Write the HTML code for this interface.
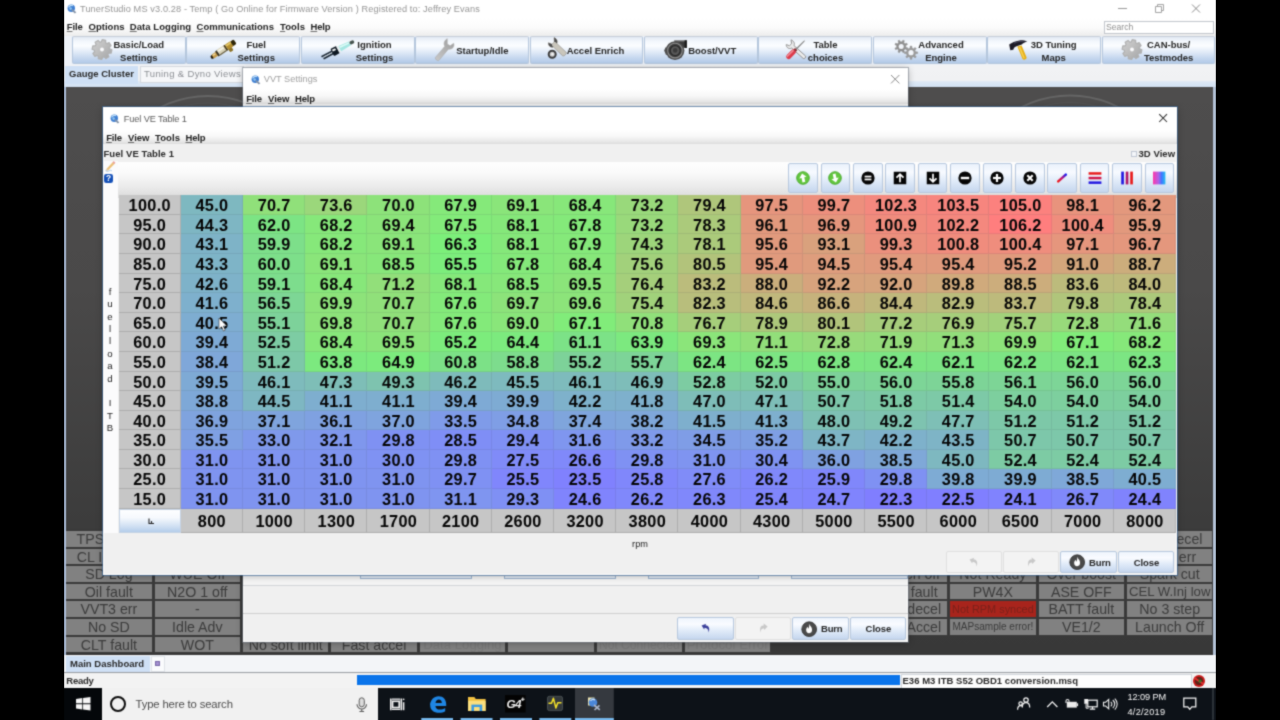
<!DOCTYPE html><html><head><meta charset="utf-8"><title>TunerStudio MS</title><style>
*{box-sizing:border-box;margin:0;padding:0}
html,body{width:1280px;height:720px;overflow:hidden;background:#000}
body{font-family:"Liberation Sans",Arial,sans-serif;position:relative;color:#000}
.abs,.c,.ind,.tbb,.ttb,.dbtn,.vt,.t{position:absolute}
.t{white-space:nowrap;line-height:1;display:block}
#app{position:absolute;left:64px;top:0;width:1152px;height:689px;background:#f0f0f0;overflow:hidden}
#all{position:absolute;left:0;top:-8px;width:1280px;height:736px;overflow:hidden;filter:url(#sb)}
#in{position:absolute;left:0;top:8px;width:1280px;height:728px}
.title{left:64px;top:0;width:1152px;height:18px;background:#fff}
.title .tx{position:absolute;left:15.5px;top:3px;font-size:9.7px;color:#8c8c8c;white-space:nowrap;letter-spacing:0.0px}
.menubar{left:64px;top:18px;width:1152px;height:18px;background:linear-gradient(#fff 0%,#fbfbfb 55%,#ececec 100%)}
.menubar span,.wmenu span{font-weight:bold;font-size:10.6px;position:absolute;top:3px;white-space:nowrap;color:#1c1c1c}
u{text-decoration:underline;text-underline-offset:1px;text-decoration-thickness:0.7px;text-decoration-color:rgba(20,20,20,.6)}
.search{left:1104px;top:21px;width:109.5px;height:12.5px;background:#fff;border:1px solid #c2c6cc;font-size:8.6px;color:#8a8a8a;line-height:10px;padding-left:2px}
.toolbar{left:64px;top:36px;width:1152px;height:29px;background:#eef2f8}
.tbb{top:36.3px;height:27.9px;border:1px solid #b4c6dc;border-top-color:#c6ced9;background:linear-gradient(#e2e9f3 0%,#f4f8fd 18%,#fbfdff 34%,#e3ecf8 56%,#c4d6ee 82%,#b3cae8 100%);border-radius:2px}
.tbb .lbl{position:absolute;transform:translateX(-50%);font-weight:bold;font-size:10.4px;line-height:13.2px;text-align:center;color:#222;white-space:nowrap;top:7px}
.tbb .lbl.two{top:0.5px}
.tbb .ico{position:absolute;top:-1px;line-height:0;transform:translateX(-50%)}
.tabs{left:64px;top:64.5px;width:1152px;height:22px;background:linear-gradient(#f1f2f4 0%,#f0f1f3 70%,#dde8f5 76%,#d2e1f3 100%)}
.tab1{left:65px;top:66px;width:72.5px;height:17.5px;background:#cfe0f5;font-weight:bold;font-size:10.4px;line-height:15.5px;padding-left:4.5px;color:#222;white-space:nowrap}
.tab2{left:139.5px;top:66px;width:104px;height:16.5px;background:#f6f7f9;border:1px solid #d4d8de;font-size:10.6px;line-height:14px;padding-left:3px;color:#8a8d92;white-space:nowrap;letter-spacing:0.25px}
.dash{left:64px;top:86.5px;width:1152px;height:568px;background:linear-gradient(#4e4d4d 0%,#4a4949 35%,#3b3b3b 80%,#383838 100%)}
.dashl{left:64px;top:86.5px;width:2.4px;height:568px;background:#adc0dc}
.dashr{left:1212.5px;top:86.5px;width:3.5px;height:568px;background:#b4c3d8}
.ind{background:#818181;box-shadow:0 0 0 1.6px #3a3a3a;text-align:center;font-size:14.2px;line-height:16.3px;color:#3b3b3b;white-space:nowrap;overflow:hidden}
.ind span{display:inline-block}
.ind.sm{font-size:10.05px}
.ind.md{font-size:13.2px}
.ind.red{background:#a8241c;color:#7a211a;font-size:10.9px}
.ind.dim{color:#777777}
.btab{left:64px;top:654.5px;width:1152px;height:18.5px;background:#f3f5f8;border-bottom:1px solid #9a9ea4}
.btab1{left:66px;top:656px;width:84px;height:16px;background:#cfe0f5;font-weight:bold;font-size:10.2px;line-height:15px;padding-left:4.5px;color:#222;white-space:nowrap}
.status{left:64px;top:673.5px;width:1152px;height:15.5px;background:#f3f3f3}
.status .rdy{position:absolute;left:2.5px;top:1.5px;font-size:10.2px;font-weight:bold;color:#2a2a2a}
.prog{left:357px;top:674.8px;width:543px;height:10.4px;background:#0a74ea}
.msq{left:900.5px;top:674px;width:291px;height:14.5px;background:#fdfdfd;border:1px solid #d0d4da;font-size:9.9px;font-weight:bold;color:#2a2a2a;line-height:12px;padding-left:1.5px;white-space:nowrap}
.taskbar{left:64px;top:688.2px;width:1152px;height:39.8px;background:#0d1218}
.win{background:#f0f0f0;box-shadow:0 0 0 1px rgba(52,98,150,.62),0 1px 7px rgba(0,0,0,.28);outline:1px solid rgba(255,255,255,.75);outline-offset:-1px}
.win.inact{box-shadow:0 0 0 1px rgba(110,118,130,.5),0 1px 7px rgba(0,0,0,.3)}
.wtitle{position:absolute;left:0;top:0;right:0;background:#fff}
.wtitle .tx{position:absolute;font-size:9.9px;white-space:nowrap}
.wmenu{position:absolute;left:0;right:0;background:linear-gradient(#fff 0%,#f8f8f8 45%,#e9e9e9 80%,#dcdcdc 100%)}
.c{font-weight:bold;font-size:16.3px;line-height:20.8px;text-align:center;color:#050505;box-shadow:inset -1px -1px 0 rgba(60,70,90,.11);white-space:nowrap;letter-spacing:0.3px}
.c.ax{background:#c6c6c6;box-shadow:inset -1px -1px 0 rgba(0,0,0,.12)}
.c.xr{line-height:25.3px}
.ttb{top:163px;height:30.4px;border:1px solid #b7c8de;border-radius:2px;background:linear-gradient(#eaf1fb 0%,#f7faff 30%,#e2ecf9 58%,#c5d6ee 100%);display:flex;align-items:center;justify-content:center}
.dbtn{border:1px solid #b7c8de;border-radius:2px;background:linear-gradient(#eef4fc 0%,#f9fbff 30%,#e2ecf9 58%,#c5d6ee 100%);display:flex;align-items:center;justify-content:center;font-weight:bold;font-size:10.2px;color:#222;gap:3.5px}
.dbtn.dis{background:#f3f3f3;border-color:#e0e0e0}
.vt{left:104px;width:12px;text-align:center;font-size:9.6px;line-height:12px;color:#222}
</style></head><body><svg width="0" height="0" style="position:absolute"><defs><filter id="sb" x="0" y="0" width="100%" height="100%" color-interpolation-filters="sRGB"><feConvolveMatrix order="3" kernelMatrix="0.035 0.105 0.035 0.105 0.44 0.105 0.035 0.105 0.035" divisor="1" edgeMode="duplicate" preserveAlpha="true"/></filter></defs></svg><div id="all"><div id="in"><div class="abs" style="left:64px;top:-8px;width:1152px;height:10px;background:#fff"></div><div id="app"></div>
<div class="abs title"><span class="abs" style="left:2.5px;top:4px;line-height:0"><svg width="10" height="10" viewBox="0 0 10 10"><circle cx="4.300" cy="4.300" r="3.700" fill="#3f7fd2"/><path d="M1.700,3.400 a3,3 0 0 1 4.200,-1.700" stroke="#bfe0fa" stroke-width="1.300" fill="none"/><circle cx="3.600" cy="4.600" r="1.300" fill="#8fc4f2"/><path d="M5.200,5 L9.300,8.300 L7.900,9.400 L4.300,6.200Z" fill="#8392a6"/></svg></span><svg class="abs" style="left:1040px;top:0" width="112" height="18" viewBox="0 0 112 18"><path d="M14,8.5 h9" stroke="#9a9a9a" stroke-width="1"/><path d="M51.5,6.5 h6 v6 h-6z M53.5,6.5 v-2 h6 v6 h-2" stroke="#9a9a9a" stroke-width="0.9" fill="none"/><path d="M88,4.5 l8,8 M96,4.5 l-8,8" stroke="#8a8a8a" stroke-width="1"/></svg></div>
<span class="t" style="left:80.00px;top:5.01px;font-size:9.2px;color:#959595;letter-spacing:0.113px;">TunerStudio MS v3.0.28 - Temp ( Go Online for Firmware Version ) Registered to: Jeffrey Evans</span>
<div class="abs menubar"></div>
<span class="t" style="left:66.80px;top:22.26px;font-size:9.5px;color:#1e1e1e;font-weight:bold;letter-spacing:-0.166px;"><u>F</u>ile</span>
<span class="t" style="left:88.50px;top:22.26px;font-size:9.5px;color:#1e1e1e;font-weight:bold;letter-spacing:0.016px;"><u>O</u>ptions</span>
<span class="t" style="left:129.80px;top:22.26px;font-size:9.5px;color:#1e1e1e;font-weight:bold;letter-spacing:0.059px;"><u>D</u>ata Logging</span>
<span class="t" style="left:196.60px;top:22.26px;font-size:9.5px;color:#1e1e1e;font-weight:bold;letter-spacing:0.024px;"><u>C</u>ommunications</span>
<span class="t" style="left:280.00px;top:22.26px;font-size:9.5px;color:#1e1e1e;font-weight:bold;letter-spacing:0.075px;"><u>T</u>ools</span>
<span class="t" style="left:310.50px;top:22.26px;font-size:9.5px;color:#1e1e1e;font-weight:bold;letter-spacing:-0.147px;"><u>H</u>elp</span>
<div class="abs search"></div>
<span class="t" style="left:1106.00px;top:23.10px;font-size:8.6px;color:#8e8e8e;">Search</span>
<div class="abs toolbar"></div>
<div class="tbb" style="left:72.0px;width:113.8px"><span class="ico ico-gear" style="left:29.1px"><svg width="28" height="27" viewBox="0 0 28 27"><defs><linearGradient id="gg" x1="0" y1="0" x2="1" y2="1"><stop offset="0" stop-color="#d2d2d2"/><stop offset="0.5" stop-color="#bcbcbc"/><stop offset="1" stop-color="#a2a4a6"/></linearGradient></defs><path d="M21.67,12.80 L23.90,13.69 L23.19,17.18 L20.79,17.13 L19.91,18.43 L20.86,20.63 L17.90,22.60 L16.24,20.87 L14.70,21.17 L13.81,23.40 L10.32,22.69 L10.37,20.29 L9.07,19.41 L6.87,20.36 L4.90,17.40 L6.63,15.74 L6.33,14.20 L4.10,13.31 L4.81,9.82 L7.21,9.87 L8.09,8.57 L7.14,6.37 L10.10,4.40 L11.76,6.13 L13.30,5.83 L14.19,3.60 L17.68,4.31 L17.63,6.71 L18.93,7.59 L21.13,6.64 L23.10,9.60 L21.37,11.26Z" fill="url(#gg)" stroke="#b0b0b0" stroke-width="1.2" stroke-linejoin="round"/><circle cx="14" cy="13.5" r="1.9" fill="#fbfbfd"/></svg></span></div>
<span class="t" style="left:113.46px;top:39.96px;font-size:9.5px;color:#262626;font-weight:bold;">Basic/Load</span>
<span class="t" style="left:120.06px;top:52.86px;font-size:9.5px;color:#262626;font-weight:bold;">Settings</span>
<div class="tbb" style="left:186.4px;width:113.8px"><span class="ico ico-inj" style="left:35.8px"><svg width="30" height="27" viewBox="0 0 30 27"><g transform="translate(15,13.700) rotate(-34)"><rect x="4.500" y="0" width="4" height="6.300" rx="1" fill="#8c7228"/><rect x="-14.500" y="-1.900" width="4" height="3.800" rx="1.700" fill="#1c1408"/><rect x="-12.500" y="-2.300" width="5.500" height="4.600" rx="1" fill="#c49a48"/><rect x="-11.500" y="-1.600" width="3" height="1.300" fill="#f0d8a0"/><rect x="-7.500" y="-3" width="2" height="6" fill="#3a3222"/><rect x="-5.500" y="-3.300" width="8" height="6.600" rx="0.800" fill="#d8d2b8"/><rect x="-5" y="-2.500" width="7" height="2" fill="#f6f4e8"/><rect x="-5.500" y="2" width="8" height="1.300" fill="#6a6248"/><rect x="2.500" y="-3.200" width="1.800" height="6.400" fill="#4a3c18"/><rect x="4.300" y="-3" width="6.700" height="6" rx="0.800" fill="#b48e30"/><rect x="4.800" y="-2.300" width="5.800" height="1.600" fill="#e4c868"/><rect x="10.500" y="-2.700" width="4" height="5.400" rx="1.200" fill="#2e2608"/></g></svg></span></div>
<span class="t" style="left:246.44px;top:39.96px;font-size:9.5px;color:#262626;font-weight:bold;">Fuel</span>
<span class="t" style="left:237.46px;top:52.86px;font-size:9.5px;color:#262626;font-weight:bold;">Settings</span>
<div class="tbb" style="left:300.8px;width:113.8px"><span class="ico ico-plug" style="left:35.8px"><svg width="36" height="27" viewBox="0 0 36 27"><g transform="translate(18,13.600) rotate(-27.600)"><rect x="-18" y="-2.100" width="13" height="1.700" fill="#1c2834"/><rect x="-17" y="0.500" width="12" height="1.700" fill="#16222e"/><rect x="-16" y="-0.500" width="11" height="1" fill="#c8d0d8"/><rect x="-6.500" y="-4" width="6.500" height="8" rx="1" fill="#0e1822"/><rect x="-5.500" y="-2.600" width="3.600" height="2" fill="#f4f6f8"/><rect x="-0.300" y="-3.300" width="2.300" height="6.600" fill="#e8eef0"/><path d="M2,-3 L13.500,-2.100 L13.500,2.100 L2,3Z" fill="#a4e6e2"/><path d="M2.500,-2.300 L13,-1.500 L13,-0.200 L2.500,-0.400Z" fill="#ddfaf6"/><rect x="13.300" y="-1.700" width="4.700" height="3.400" rx="1.400" fill="#46544f"/></g></svg></span></div>
<span class="t" style="left:357.35px;top:39.96px;font-size:9.5px;color:#262626;font-weight:bold;">Ignition</span>
<span class="t" style="left:355.76px;top:52.86px;font-size:9.5px;color:#262626;font-weight:bold;">Settings</span>
<div class="tbb" style="left:415.2px;width:113.8px"><span class="ico ico-wrench" style="left:28.5px"><svg width="24" height="27" viewBox="0 0 24 27"><defs><linearGradient id="wg" x1="0" y1="0" x2="1" y2="0"><stop offset="0" stop-color="#c6c6c6"/><stop offset="1" stop-color="#a2a2a2"/></linearGradient></defs><g transform="translate(12,13.600) rotate(-50)"><path d="M-11.800,-2.300 L2.500,-2.300 C3.500,-5.300 6.500,-6.400 9.800,-5.300 L5.800,-1.900 L6.200,1.500 L10.400,2.600 C8.500,5.700 4.500,5.600 2.500,2.300 L-11.800,2.300 C-14,2.300 -14,-2.300 -11.800,-2.300Z" fill="url(#wg)" stroke="#a8a8a8" stroke-width="0.500"/></g></svg></span></div>
<span class="t" style="left:456.17px;top:46.16px;font-size:9.5px;color:#262626;font-weight:bold;">Startup/Idle</span>
<div class="tbb" style="left:529.6px;width:113.8px"><span class="ico ico-wrench2" style="left:26.4px"><svg width="24" height="27" viewBox="0 0 24 27"><g transform="translate(12.300,11.300) rotate(43.500)"><path d="M9.500,-2.500 L-3,-2.500 C-3.800,-5 -6.500,-5.800 -9,-4.800 L-5.800,-1.800 L-6,1.400 L-9.600,2.800 C-7.500,5.400 -4.200,4.800 -3,2.500 L9.500,2.500 C11.500,2.500 11.500,-2.500 9.500,-2.500Z" fill="#c9c6bc" stroke="#8e8c86" stroke-width="0.600"/><path d="M-9,-4.800 C-6.500,-5.800 -3.800,-5 -3,-2.500 L-5,-2.500 L-5.800,-1.800Z M-9.600,2.800 L-6,1.400 L-4.600,2.500 L-3,2.500 C-4.200,4.800 -7.500,5.400 -9.600,2.800Z" fill="#4e4e4e"/></g><circle cx="7.200" cy="18.300" r="3.500" fill="#cfcfcf" stroke="#3c3c3c" stroke-width="2"/><circle cx="7.600" cy="18.300" r="1.200" fill="#f2f2f2"/></svg></span></div>
<span class="t" style="left:566.72px;top:46.16px;font-size:9.5px;color:#262626;font-weight:bold;">Accel Enrich</span>
<div class="tbb" style="left:644.0px;width:113.8px"><span class="ico ico-turbo" style="left:30.6px"><svg width="26" height="27" viewBox="0 0 26 27"><path d="M11,4.500 L23.600,4.500 L23.600,11.700 L15,11.700Z" fill="#3a3a3a"/><rect x="21.600" y="4.200" width="2.300" height="7.800" fill="#1c1c1c"/><path d="M12,5.300 L21.400,5.300" stroke="#6c6c6c" stroke-width="0.900"/><circle cx="12" cy="14.600" r="9.400" fill="#4c4c4c"/><path d="M3.200,11.500 L1.800,14.500 L3.600,18.800" fill="#4c4c4c" stroke="#4c4c4c" stroke-width="1.200"/><circle cx="12" cy="14.600" r="7.300" fill="#3e3e3e" stroke="#8e8e8e" stroke-width="1.100"/><circle cx="12.200" cy="14.600" r="5" fill="#585858" stroke="#2a2a2a" stroke-width="1.300"/><circle cx="12.200" cy="14.400" r="2.300" fill="#3a3a3a"/></svg></span></div>
<span class="t" style="left:688.19px;top:46.16px;font-size:9.5px;color:#262626;font-weight:bold;">Boost/VVT</span>
<div class="tbb" style="left:758.4px;width:113.8px"><span class="ico ico-tools" style="left:37.0px"><svg width="24" height="27" viewBox="0 0 24 27"><g transform="translate(11.800,13.500) rotate(42)"><path d="M11.500,-1.700 L-4,-1.700 C-4.800,-4.200 -7.500,-5 -10,-4 L-7,-1.500 L-7.200,1.400 L-10.400,2.800 C-8.300,5 -5.200,4.500 -4,1.700 L11.500,1.700 C13,1.700 13,-1.700 11.500,-1.700Z" fill="#ececec" stroke="#909090" stroke-width="0.900"/></g><g transform="translate(11.800,13.500) rotate(-45)"><path d="M0,-0.800 L11.500,-0.600 L13,0 L11.500,0.600 L0,0.800Z" fill="#8a8a8a"/><rect x="-12.500" y="-2.500" width="11.500" height="5" rx="2.300" fill="#dc3a4a"/><rect x="-11.500" y="-1.900" width="9.500" height="1.500" rx="0.700" fill="#f08a94"/><rect x="-1.500" y="-1.600" width="2" height="3.200" fill="#8c2c34"/></g></svg></span></div>
<span class="t" style="left:813.45px;top:39.96px;font-size:9.5px;color:#262626;font-weight:bold;">Table</span>
<span class="t" style="left:807.81px;top:52.86px;font-size:9.5px;color:#262626;font-weight:bold;">choices</span>
<div class="tbb" style="left:872.8px;width:113.8px"><span class="ico ico-gears" style="left:31.7px"><svg width="28" height="27" viewBox="0 0 28 27"><path d="M14.73,11.20 L16.46,12.15 L15.88,13.56 L13.98,13.02 L12.84,14.17 L13.39,16.06 L11.98,16.65 L11.02,14.93 L9.40,14.93 L8.45,16.66 L7.04,16.08 L7.58,14.18 L6.43,13.04 L4.54,13.59 L3.95,12.18 L5.67,11.22 L5.67,9.60 L3.94,8.65 L4.52,7.24 L6.42,7.78 L7.56,6.63 L7.01,4.74 L8.42,4.15 L9.38,5.87 L11.00,5.87 L11.95,4.14 L13.36,4.72 L12.82,6.62 L13.97,7.76 L15.86,7.21 L16.45,8.62 L14.73,9.58Z" fill="#909090" stroke="#8c8c8c" stroke-width="0.5" stroke-linejoin="round"/><circle cx="10.2" cy="10.4" r="2.5" fill="#f2f5fa"/><path d="M24.59,15.69 L26.65,15.91 L26.65,17.49 L24.59,17.71 L23.96,19.23 L25.26,20.85 L24.15,21.96 L22.53,20.66 L21.01,21.29 L20.79,23.35 L19.21,23.35 L18.99,21.29 L17.47,20.66 L15.85,21.96 L14.74,20.85 L16.04,19.23 L15.41,17.71 L13.35,17.49 L13.35,15.91 L15.41,15.69 L16.04,14.17 L14.74,12.55 L15.85,11.44 L17.47,12.74 L18.99,12.11 L19.21,10.05 L20.79,10.05 L21.01,12.11 L22.53,12.74 L24.15,11.44 L25.26,12.55 L23.96,14.17Z" fill="#9a9a9a" stroke="#949494" stroke-width="0.5" stroke-linejoin="round"/><circle cx="20" cy="16.700" r="2.600" fill="#f2f5fa"/></svg></span></div>
<span class="t" style="left:918.30px;top:39.96px;font-size:9.5px;color:#262626;font-weight:bold;">Advanced</span>
<span class="t" style="left:925.17px;top:52.86px;font-size:9.5px;color:#262626;font-weight:bold;">Engine</span>
<div class="tbb" style="left:987.2px;width:113.8px"><span class="ico ico-hammer" style="left:31.1px"><svg width="24" height="27" viewBox="0 0 24 27"><path d="M10.300,10.500 L14.600,9.500 L19.600,21.600 C20,23.300 16.500,24.600 15.600,23Z" fill="#e6ae12"/><path d="M11.500,11 L13.200,10.600 L17.800,22 L16.500,22.600Z" fill="#f6cf52"/><path d="M2.200,8.500 C5,6.500 8.500,5 12.500,4.400 C15,4.100 18,4.600 20.300,5.400 C18,6 16,7 14.800,8.600 L9.600,10.300 C8,10.700 7,11.600 6.300,13.700 L3.300,14.300Z" fill="#1c1a26"/><path d="M7,7.400 C10,5.800 13,5.200 16.500,5.300" stroke="#4a4860" stroke-width="0.900" fill="none"/></svg></span></div>
<span class="t" style="left:1030.83px;top:39.96px;font-size:9.5px;color:#262626;font-weight:bold;">3D Tuning</span>
<span class="t" style="left:1041.56px;top:52.86px;font-size:9.5px;color:#262626;font-weight:bold;">Maps</span>
<div class="tbb" style="left:1101.6px;width:113.8px"><span class="ico ico-gear" style="left:29.4px"><svg width="28" height="27" viewBox="0 0 28 27"><defs><linearGradient id="gg" x1="0" y1="0" x2="1" y2="1"><stop offset="0" stop-color="#d2d2d2"/><stop offset="0.5" stop-color="#bcbcbc"/><stop offset="1" stop-color="#a2a4a6"/></linearGradient></defs><path d="M21.67,12.80 L23.90,13.69 L23.19,17.18 L20.79,17.13 L19.91,18.43 L20.86,20.63 L17.90,22.60 L16.24,20.87 L14.70,21.17 L13.81,23.40 L10.32,22.69 L10.37,20.29 L9.07,19.41 L6.87,20.36 L4.90,17.40 L6.63,15.74 L6.33,14.20 L4.10,13.31 L4.81,9.82 L7.21,9.87 L8.09,8.57 L7.14,6.37 L10.10,4.40 L11.76,6.13 L13.30,5.83 L14.19,3.60 L17.68,4.31 L17.63,6.71 L18.93,7.59 L21.13,6.64 L23.10,9.60 L21.37,11.26Z" fill="url(#gg)" stroke="#b0b0b0" stroke-width="1.2" stroke-linejoin="round"/><circle cx="14" cy="13.5" r="1.9" fill="#fbfbfd"/></svg></span></div>
<span class="t" style="left:1146.96px;top:39.96px;font-size:9.5px;color:#262626;font-weight:bold;">CAN-bus/</span>
<span class="t" style="left:1143.88px;top:52.86px;font-size:9.5px;color:#262626;font-weight:bold;">Testmodes</span>
<div class="abs tabs"></div><div class="abs tab1"></div><div class="abs tab2"></div>
<span class="t" style="left:69.00px;top:68.76px;font-size:9.5px;color:#2a2a2a;font-weight:bold;letter-spacing:0.005px;">Gauge Cluster</span>
<span class="t" style="left:144.00px;top:68.66px;font-size:9.5px;color:#8c8f94;letter-spacing:0.353px;">Tuning &amp; Dyno Views</span>
<div class="abs dash"></div>
<svg class="abs" style="left:64px;top:87px" width="1152" height="40" viewBox="64 87 1152 40"><g fill="none"><circle cx="208" cy="202" r="106" stroke="#656565" stroke-width="1.800"/><circle cx="208" cy="202" r="99" stroke="#545454" stroke-width="1"/><circle cx="1070" cy="201.500" r="106" stroke="#656565" stroke-width="1.800"/><circle cx="1070" cy="201.500" r="99" stroke="#545454" stroke-width="1"/></g></svg>
<div class="ind" style="left:66.2px;top:531.2px;width:85.4px;height:15.50px;"><span>TPS accel</span></div>
<div class="ind" style="left:154.6px;top:531.2px;width:85.4px;height:15.50px;"><span></span></div>
<div class="ind" style="left:243.0px;top:531.2px;width:85.4px;height:15.50px;"><span></span></div>
<div class="ind" style="left:331.4px;top:531.2px;width:85.4px;height:15.50px;"><span></span></div>
<div class="ind" style="left:419.8px;top:531.2px;width:85.4px;height:15.50px;"><span></span></div>
<div class="ind" style="left:508.2px;top:531.2px;width:85.4px;height:15.50px;"><span></span></div>
<div class="ind" style="left:596.6px;top:531.2px;width:85.4px;height:15.50px;"><span></span></div>
<div class="ind" style="left:685.0px;top:531.2px;width:85.4px;height:15.50px;"><span></span></div>
<div class="ind" style="left:773.4px;top:531.2px;width:85.4px;height:15.50px;"><span></span></div>
<div class="ind" style="left:861.8px;top:531.2px;width:85.4px;height:15.50px;padding-left:5px;"><span></span></div>
<div class="ind" style="left:950.2px;top:531.2px;width:85.4px;height:15.50px;"><span></span></div>
<div class="ind" style="left:1038.6px;top:531.2px;width:85.4px;height:15.50px;"><span></span></div>
<div class="ind" style="left:1127.0px;top:531.2px;width:85.4px;height:15.50px;"><span>TPS decel</span></div>
<div class="ind" style="left:66.2px;top:548.8px;width:85.4px;height:15.50px;"><span>CL Idle on</span></div>
<div class="ind" style="left:154.6px;top:548.8px;width:85.4px;height:15.50px;"><span></span></div>
<div class="ind" style="left:243.0px;top:548.8px;width:85.4px;height:15.50px;"><span></span></div>
<div class="ind" style="left:331.4px;top:548.8px;width:85.4px;height:15.50px;"><span></span></div>
<div class="ind" style="left:419.8px;top:548.8px;width:85.4px;height:15.50px;"><span></span></div>
<div class="ind" style="left:508.2px;top:548.8px;width:85.4px;height:15.50px;"><span></span></div>
<div class="ind" style="left:596.6px;top:548.8px;width:85.4px;height:15.50px;"><span></span></div>
<div class="ind" style="left:685.0px;top:548.8px;width:85.4px;height:15.50px;"><span></span></div>
<div class="ind" style="left:773.4px;top:548.8px;width:85.4px;height:15.50px;"><span></span></div>
<div class="ind" style="left:861.8px;top:548.8px;width:85.4px;height:15.50px;padding-left:5px;"><span></span></div>
<div class="ind" style="left:950.2px;top:548.8px;width:85.4px;height:15.50px;"><span></span></div>
<div class="ind" style="left:1038.6px;top:548.8px;width:85.4px;height:15.50px;"><span></span></div>
<div class="ind" style="left:1127.0px;top:548.8px;width:85.4px;height:15.50px;"><span>Sync err</span></div>
<div class="ind" style="left:66.2px;top:566.3px;width:85.4px;height:15.50px;"><span>SD Log</span></div>
<div class="ind" style="left:154.6px;top:566.3px;width:85.4px;height:15.50px;"><span>WUE Off</span></div>
<div class="ind" style="left:243.0px;top:566.3px;width:85.4px;height:15.50px;"><span></span></div>
<div class="ind" style="left:331.4px;top:566.3px;width:85.4px;height:15.50px;"><span></span></div>
<div class="ind" style="left:419.8px;top:566.3px;width:85.4px;height:15.50px;"><span></span></div>
<div class="ind" style="left:508.2px;top:566.3px;width:85.4px;height:15.50px;"><span></span></div>
<div class="ind" style="left:596.6px;top:566.3px;width:85.4px;height:15.50px;"><span></span></div>
<div class="ind" style="left:685.0px;top:566.3px;width:85.4px;height:15.50px;"><span></span></div>
<div class="ind" style="left:773.4px;top:566.3px;width:85.4px;height:15.50px;"><span></span></div>
<div class="ind" style="left:861.8px;top:566.3px;width:85.4px;height:15.50px;padding-left:5px;"><span>Launch off</span></div>
<div class="ind" style="left:950.2px;top:566.3px;width:85.4px;height:15.50px;"><span>Not Ready</span></div>
<div class="ind" style="left:1038.6px;top:566.3px;width:85.4px;height:15.50px;"><span>Over boost</span></div>
<div class="ind" style="left:1127.0px;top:566.3px;width:85.4px;height:15.50px;"><span>Spark cut</span></div>
<div class="ind" style="left:66.2px;top:583.9px;width:85.4px;height:15.50px;"><span>Oil fault</span></div>
<div class="ind" style="left:154.6px;top:583.9px;width:85.4px;height:15.50px;"><span>N2O 1 off</span></div>
<div class="ind" style="left:243.0px;top:583.9px;width:85.4px;height:15.50px;"><span></span></div>
<div class="ind" style="left:331.4px;top:583.9px;width:85.4px;height:15.50px;"><span></span></div>
<div class="ind" style="left:419.8px;top:583.9px;width:85.4px;height:15.50px;"><span></span></div>
<div class="ind" style="left:508.2px;top:583.9px;width:85.4px;height:15.50px;"><span></span></div>
<div class="ind" style="left:596.6px;top:583.9px;width:85.4px;height:15.50px;"><span></span></div>
<div class="ind" style="left:685.0px;top:583.9px;width:85.4px;height:15.50px;"><span></span></div>
<div class="ind" style="left:773.4px;top:583.9px;width:85.4px;height:15.50px;"><span></span></div>
<div class="ind" style="left:861.8px;top:583.9px;width:85.4px;height:15.50px;padding-left:5px;"><span>MAP fault</span></div>
<div class="ind" style="left:950.2px;top:583.9px;width:85.4px;height:15.50px;"><span>PW4X</span></div>
<div class="ind" style="left:1038.6px;top:583.9px;width:85.4px;height:15.50px;"><span>ASE OFF</span></div>
<div class="ind md" style="left:1127.0px;top:583.9px;width:85.4px;height:15.50px;"><span>CEL W.Inj low</span></div>
<div class="ind" style="left:66.2px;top:601.4px;width:85.4px;height:15.50px;"><span>VVT3 err</span></div>
<div class="ind" style="left:154.6px;top:601.4px;width:85.4px;height:15.50px;"><span>-</span></div>
<div class="ind" style="left:243.0px;top:601.4px;width:85.4px;height:15.50px;"><span></span></div>
<div class="ind" style="left:331.4px;top:601.4px;width:85.4px;height:15.50px;"><span></span></div>
<div class="ind" style="left:419.8px;top:601.4px;width:85.4px;height:15.50px;"><span></span></div>
<div class="ind" style="left:508.2px;top:601.4px;width:85.4px;height:15.50px;"><span></span></div>
<div class="ind" style="left:596.6px;top:601.4px;width:85.4px;height:15.50px;"><span></span></div>
<div class="ind" style="left:685.0px;top:601.4px;width:85.4px;height:15.50px;"><span></span></div>
<div class="ind" style="left:773.4px;top:601.4px;width:85.4px;height:15.50px;"><span></span></div>
<div class="ind" style="left:861.8px;top:601.4px;width:85.4px;height:15.50px;padding-left:5px;"><span>MAP decel</span></div>
<div class="ind red" style="left:950.2px;top:601.4px;width:85.4px;height:15.50px;"><span>Not RPM synced</span></div>
<div class="ind" style="left:1038.6px;top:601.4px;width:85.4px;height:15.50px;"><span>BATT fault</span></div>
<div class="ind" style="left:1127.0px;top:601.4px;width:85.4px;height:15.50px;"><span>No 3 step</span></div>
<div class="ind" style="left:66.2px;top:619.0px;width:85.4px;height:15.50px;"><span>No SD</span></div>
<div class="ind" style="left:154.6px;top:619.0px;width:85.4px;height:15.50px;"><span>Idle Adv</span></div>
<div class="ind" style="left:243.0px;top:619.0px;width:85.4px;height:15.50px;"><span></span></div>
<div class="ind" style="left:331.4px;top:619.0px;width:85.4px;height:15.50px;"><span></span></div>
<div class="ind" style="left:419.8px;top:619.0px;width:85.4px;height:15.50px;"><span></span></div>
<div class="ind" style="left:508.2px;top:619.0px;width:85.4px;height:15.50px;"><span></span></div>
<div class="ind" style="left:596.6px;top:619.0px;width:85.4px;height:15.50px;"><span></span></div>
<div class="ind" style="left:685.0px;top:619.0px;width:85.4px;height:15.50px;"><span></span></div>
<div class="ind" style="left:773.4px;top:619.0px;width:85.4px;height:15.50px;"><span></span></div>
<div class="ind" style="left:861.8px;top:619.0px;width:85.4px;height:15.50px;padding-left:5px;"><span>MAP Accel</span></div>
<div class="ind sm" style="left:950.2px;top:619.0px;width:85.4px;height:15.50px;"><span>MAPsample error!</span></div>
<div class="ind" style="left:1038.6px;top:619.0px;width:85.4px;height:15.50px;"><span>VE1/2</span></div>
<div class="ind" style="left:1127.0px;top:619.0px;width:85.4px;height:15.50px;"><span>Launch Off</span></div>
<div class="ind" style="left:66.2px;top:636.5px;width:85.4px;height:15.50px;"><span>CLT fault</span></div>
<div class="ind" style="left:154.6px;top:636.5px;width:85.4px;height:15.50px;"><span>WOT</span></div>
<div class="ind" style="left:243.0px;top:636.5px;width:85.4px;height:15.50px;"><span>No soft limit</span></div>
<div class="ind" style="left:331.4px;top:636.5px;width:85.4px;height:15.50px;"><span>Fast accel</span></div>
<div class="ind dim" style="left:419.8px;top:636.5px;width:85.4px;height:15.50px;font-size:13.2px;"><span>Data Logging</span></div>
<div class="ind" style="left:508.2px;top:636.5px;width:85.4px;height:15.50px;"><span></span></div>
<div class="ind dim" style="left:596.6px;top:636.5px;width:85.4px;height:15.50px;font-size:12.1px;"><span>Not Connected</span></div>
<div class="ind dim" style="left:685.0px;top:636.5px;width:85.4px;height:15.50px;font-size:13.3px;"><span>Protocol Error</span></div>
<div class="abs dashl"></div><div class="abs dashr"></div>
<div class="abs btab"></div><div class="abs btab1"></div><div class="abs" style="left:150.5px;top:656px;width:14.5px;height:15.5px;border:1px solid #dfe3e8;background:#fafbfd"><div style="position:absolute;left:3.2px;top:3.6px;width:5.6px;height:5.4px;background:#a48fd0;border:1px solid #7868a8"></div></div>
<span class="t" style="left:70.00px;top:658.56px;font-size:9.5px;color:#2a2a2a;font-weight:bold;letter-spacing:0.007px;">Main Dashboard</span>
<div class="abs status"></div><div class="abs prog"></div><div class="abs msq"></div>
<span class="t" style="left:66.30px;top:675.76px;font-size:9.5px;color:#2a2a2a;font-weight:bold;letter-spacing:-0.243px;">Ready</span>
<span class="t" style="left:902.50px;top:675.96px;font-size:9.5px;color:#2a2a2a;font-weight:bold;letter-spacing:0.022px;">E36 M3 ITB S52 OBD1 conversion.msq</span>
<svg class="abs" style="left:1192px;top:674px" width="14" height="14" viewBox="0 0 14 14"><circle cx="7" cy="7" r="6" fill="#c81818"/><circle cx="7" cy="7" r="4" fill="#5a2418"/><path d="M2.5,4 L11.5,10" stroke="#e83030" stroke-width="1.8"/><circle cx="8" cy="7" r="1.6" fill="#3c7a28"/></svg>
<div class="abs win inact" style="left:243px;top:68px;width:665px;height:574px"><div class="wtitle" style="height:21px"><span class="abs" style="left:7.5px;top:6.5px;line-height:0"><svg width="10" height="10" viewBox="0 0 10 10"><circle cx="4.300" cy="4.300" r="3.700" fill="#3f7fd2"/><path d="M1.700,3.400 a3,3 0 0 1 4.200,-1.700" stroke="#bfe0fa" stroke-width="1.300" fill="none"/><circle cx="3.600" cy="4.600" r="1.300" fill="#8fc4f2"/><path d="M5.200,5 L9.300,8.300 L7.900,9.400 L4.300,6.200Z" fill="#8392a6"/></svg></span><svg class="abs" style="left:646.5px;top:6px" width="11" height="11" viewBox="0 0 11 11"><path d="M1,1 l8.4,8.4 M9.4,1 l-8.400,8.400" stroke="#8a8a8a" stroke-width="1"/></svg></div><div class="wmenu" style="top:21px;height:15px"></div><div class="abs" style="left:0;top:508px;width:665px;height:9.5px;background:#f4f4f4;border-bottom:1.5px solid #d2d4d8"></div><div class="abs" style="left:116.5px;top:508px;width:112.5px;height:3px;border:1px solid #9db4d0;border-top:0;background:#e4ecf6"></div><div class="abs" style="left:260.5px;top:508px;width:112.5px;height:3px;border:1px solid #9db4d0;border-top:0;background:#e4ecf6"></div><div class="abs" style="left:404.5px;top:508px;width:111.5px;height:3px;border:1px solid #9db4d0;border-top:0;background:#e4ecf6"></div><div class="abs" style="left:548px;top:508px;width:117px;height:3px;border:1px solid #9db4d0;border-top:0;background:#e4ecf6"></div><div class="abs" style="left:0;top:545px;width:665px;height:1px;background:#cfcfcf"></div></div>
<span class="t" style="left:263.80px;top:75.31px;font-size:9.2px;color:#a0a0a0;letter-spacing:0.015px;">VVT Settings</span>
<span class="t" style="left:246.20px;top:93.66px;font-size:9.5px;color:#1e1e1e;font-weight:bold;letter-spacing:-0.191px;"><u>F</u>ile</span>
<span class="t" style="left:268.00px;top:93.66px;font-size:9.5px;color:#1e1e1e;font-weight:bold;letter-spacing:0.006px;"><u>V</u>iew</span>
<span class="t" style="left:295.00px;top:93.66px;font-size:9.5px;color:#1e1e1e;font-weight:bold;letter-spacing:-0.147px;"><u>H</u>elp</span>
<div class="dbtn db-undo" style="left:677.4px;top:617.1px;width:56.5px;height:22.8px"><svg width="14" height="12" viewBox="0 0 14 12"><path d="M2.600,3.400 L7.200,1.800 L6.400,3.300 C9.800,3.400 11,6.200 9.800,10.400 C9.400,7.600 8.200,6 5.600,5.800 L5.200,7.600Z" fill="#3a3f9a"/></svg></div>
<div class="dbtn dis db-redo" style="left:734.8px;top:617.1px;width:56.5px;height:22.8px"><svg width="14" height="12" viewBox="0 0 14 12"><path d="M11.6,4.4 L7.6,1.6 L7.8,3.4 C4.6,3.2 3.4,5.8 4.4,10.6 C4.8,7.6 5.6,6.2 8,6.4 L8.2,8Z" fill="#c8c8c8"/></svg></div>
<div class="dbtn db-burn" style="left:792.2px;top:617.1px;width:56.5px;height:22.8px"></div>
<div class="dbtn db-close" style="left:849.6px;top:617.1px;width:56.5px;height:22.8px"></div>
<span class="abs" style="left:800.5px;top:620.5px;line-height:0"><svg width="16.4" height="16.4" viewBox="0 0 16 16"><circle cx="8" cy="8" r="7.2" fill="#4a4a4a" stroke="#2e2e2e" stroke-width="0.8"/><path d="M8,2.6 c0.6,2 2.8,3 2.8,5.8 a2.9,3.4 0 0 1 -5.8,0.2 c0,-1.4 0.8,-2 1.2,-3 c0.6,0.8 0.8,1.4 0.8,2 c0.8,-1 1.2,-2.8 1,-5z" fill="#fff"/></svg></span>
<span class="t" style="left:821.00px;top:624.36px;font-size:9.5px;color:#262626;font-weight:bold;letter-spacing:-0.191px;">Burn</span>
<span class="t" style="left:865.60px;top:624.36px;font-size:9.5px;color:#262626;font-weight:bold;letter-spacing:-0.054px;">Close</span>
<div class="abs win" style="left:103px;top:107px;width:1074.2px;height:467.8px"><div class="wtitle" style="height:23px"><span class="abs" style="left:7px;top:7px;line-height:0"><svg width="10" height="10" viewBox="0 0 10 10"><circle cx="4.300" cy="4.300" r="3.700" fill="#3f7fd2"/><path d="M1.700,3.400 a3,3 0 0 1 4.200,-1.700" stroke="#bfe0fa" stroke-width="1.300" fill="none"/><circle cx="3.600" cy="4.600" r="1.300" fill="#8fc4f2"/><path d="M5.200,5 L9.300,8.300 L7.900,9.400 L4.300,6.200Z" fill="#8392a6"/></svg></span><svg class="abs" style="left:1055.400px;top:6.200px" width="11" height="11" viewBox="0 0 11 11"><path d="M1.200,1.200 l7.800,7.800 M9,1.200 l-7.800,7.800" stroke="#2a2a2a" stroke-width="1.050"/></svg></div><div class="wmenu" style="top:23px;height:14px"></div><div class="abs" style="left:1028.2px;top:43.6px;width:5.6px;height:6px;border:1px solid #c0c8d4;background:#f4f6fa"></div><div class="abs" style="left:0;top:54px;width:14.5px;height:372px;background:#fbfbfc"></div><div class="abs" style="left:14.5px;top:54.5px;width:1059.7px;height:36px;background:linear-gradient(#fefefe 0%,#fafafa 30%,#eaeaea 70%,#dadada 100%)"></div></div>
<span class="t" style="left:123.80px;top:114.81px;font-size:9.2px;color:#5a5a5a;letter-spacing:-0.119px;">Fuel VE Table 1</span>
<span class="t" style="left:106.20px;top:132.66px;font-size:9.5px;color:#1e1e1e;font-weight:bold;letter-spacing:-0.191px;"><u>F</u>ile</span>
<span class="t" style="left:128.00px;top:132.66px;font-size:9.5px;color:#1e1e1e;font-weight:bold;letter-spacing:-0.044px;"><u>V</u>iew</span>
<span class="t" style="left:155.00px;top:132.66px;font-size:9.5px;color:#1e1e1e;font-weight:bold;letter-spacing:0.075px;"><u>T</u>ools</span>
<span class="t" style="left:185.50px;top:132.66px;font-size:9.5px;color:#1e1e1e;font-weight:bold;letter-spacing:-0.147px;"><u>H</u>elp</span>
<span class="t" style="left:103.50px;top:148.76px;font-size:9.5px;color:#2a2a2a;font-weight:bold;letter-spacing:0.066px;">Fuel VE Table 1</span>
<span class="t" style="left:1138.40px;top:148.96px;font-size:9.5px;color:#2a2a2a;font-weight:bold;letter-spacing:0.077px;">3D View</span>
<svg class="abs" style="left:103.500px;top:160px" width="13" height="13" viewBox="0 0 13 13"><path d="M3.200,9.800 L10,2.600" stroke="#ecc078" stroke-width="2.300" stroke-linecap="butt"/><path d="M9.300,3.300 L10.600,1.900" stroke="#eaa0a0" stroke-width="2.300"/><path d="M2.300,10.800 L3.400,9.600" stroke="#d8c8b0" stroke-width="1.600"/><path d="M1.500,10.600 q2,1.800 3.600,0.200 q1.400,-1 2.800,0" stroke="#a8c8e8" stroke-width="0.900" fill="none"/></svg>
<div class="abs" style="left:103.600px;top:173.500px;width:9.700px;height:9.300px;border-radius:2.200px;background:#1450b8"></div>
<span class="t" style="left:105.93px;top:174.10px;font-size:8.4px;color:#fff;font-weight:bold;">?</span>
<div class="vt" style="top:286.0px">f</div>
<div class="vt" style="top:298.4px">u</div>
<div class="vt" style="top:310.7px">e</div>
<div class="vt" style="top:323.1px">l</div>
<div class="vt" style="top:335.4px">l</div>
<div class="vt" style="top:347.8px">o</div>
<div class="vt" style="top:360.1px">a</div>
<div class="vt" style="top:372.5px">d</div>
<div class="vt" style="top:397.2px">I</div>
<div class="vt" style="top:409.5px">T</div>
<div class="vt" style="top:421.9px">B</div>
<div class="ttb" style="left:788.1px;width:29.8px"><svg width="16" height="16" viewBox="0 0 16 16"><circle cx="8" cy="8" r="6.3" fill="#62c63e" stroke="#4aa82c" stroke-width="0.9"/><path d="M8,3.400 L4.300,7.600 H6.600 V12.200 H9.400 V7.600 H11.700Z" fill="#fff" transform="rotate(-12 8 8)"/></svg></div>
<div class="ttb" style="left:820.5px;width:29.8px"><svg width="16" height="16" viewBox="0 0 16 16"><circle cx="8" cy="8" r="6.3" fill="#62c63e" stroke="#4aa82c" stroke-width="0.9"/><path d="M8,12.600 L4.300,8.400 H6.600 V3.800 H9.400 V8.400 H11.700Z" fill="#fff" transform="rotate(-12 8 8)"/></svg></div>
<div class="ttb" style="left:852.9px;width:29.8px"><svg width="16" height="16" viewBox="0 0 16 16"><circle cx="8" cy="8" r="6.600" fill="#050505"/><rect x="4.600" y="5.700" width="6.800" height="1.700" fill="#fff"/><rect x="4.600" y="8.600" width="6.800" height="1.700" fill="#fff"/></svg></div>
<div class="ttb" style="left:885.3px;width:29.8px"><svg width="16" height="16" viewBox="0 0 16 16"><rect x="1.750" y="1.750" width="12.500" height="12.500" fill="#050505"/><path d="M8,12.300 V4.200 M4.500,7.700 L8,4.100 L11.500,7.700" stroke="#fff" stroke-width="1.700" fill="none"/></svg></div>
<div class="ttb" style="left:917.7px;width:29.8px"><svg width="16" height="16" viewBox="0 0 16 16"><rect x="1.750" y="1.750" width="12.500" height="12.500" fill="#050505"/><path d="M8,3.700 V11.800 M4.500,8.300 L8,11.900 L11.500,8.300" stroke="#fff" stroke-width="1.700" fill="none"/></svg></div>
<div class="ttb" style="left:950.1px;width:29.8px"><svg width="16" height="16" viewBox="0 0 16 16"><circle cx="8" cy="8" r="6.600" fill="#050505"/><rect x="3.800" y="6.800" width="8.400" height="2.400" fill="#fff"/></svg></div>
<div class="ttb" style="left:982.5px;width:29.8px"><svg width="16" height="16" viewBox="0 0 16 16"><circle cx="8" cy="8" r="6.600" fill="#050505"/><rect x="4" y="6.900" width="8" height="2.200" fill="#fff"/><rect x="6.900" y="4" width="2.200" height="8" fill="#fff"/></svg></div>
<div class="ttb" style="left:1014.9px;width:29.8px"><svg width="16" height="16" viewBox="0 0 16 16"><circle cx="8" cy="8" r="6.600" fill="#050505"/><path d="M5.300,5.300 L10.700,10.700 M10.700,5.300 L5.300,10.700" stroke="#fff" stroke-width="2.100"/></svg></div>
<div class="ttb" style="left:1047.3px;width:29.8px"><svg width="16" height="16" viewBox="0 0 16 16"><defs><linearGradient id="lg8" x1="0" y1="1" x2="1" y2="0"><stop offset="0" stop-color="#f01818"/><stop offset="0.5" stop-color="#c01878"/><stop offset="1" stop-color="#1818f0"/></linearGradient></defs><path d="M4.200,11.400 L11.800,4.600" stroke="url(#lg8)" stroke-width="2.500" stroke-linecap="round"/></svg></div>
<div class="ttb" style="left:1079.7px;width:29.8px"><svg width="16" height="16" viewBox="0 0 16 16"><rect x="1.600" y="2.200" width="12.800" height="2.500" fill="#e81c1c"/><rect x="1.600" y="6.800" width="12.800" height="2.500" fill="#d01848"/><rect x="1.600" y="11.400" width="12.800" height="2.500" fill="#2418e0"/></svg></div>
<div class="ttb" style="left:1112.1px;width:29.8px"><svg width="16" height="16" viewBox="0 0 16 16"><rect x="2.200" y="1.600" width="2.700" height="12.800" fill="#2418e0"/><rect x="6.700" y="1.600" width="2.700" height="12.800" fill="#b01868"/><rect x="11.200" y="1.600" width="2.700" height="12.800" fill="#e81c1c"/></svg></div>
<div class="ttb" style="left:1144.5px;width:29.8px"><svg width="16" height="16" viewBox="0 0 16 16"><defs><linearGradient id="lg11" x1="0" y1="0" x2="1" y2="0"><stop offset="0" stop-color="#ff38a8"/><stop offset="0.45" stop-color="#b060e8"/><stop offset="0.7" stop-color="#3c78ff"/><stop offset="1" stop-color="#28c0f0"/></linearGradient></defs><rect x="2" y="1.600" width="12.400" height="12.800" fill="url(#lg11)"/></svg></div>
<div class="c ax" style="left:118.6px;top:195.30px;width:62.2px;height:19.58px">100.0</div>
<div class="c" style="left:180.8px;top:195.30px;width:62.2px;height:19.58px;background:#7eb8c0">45.0</div>
<div class="c" style="left:243.0px;top:195.30px;width:62.2px;height:19.58px;background:#90e07a">70.7</div>
<div class="c" style="left:305.2px;top:195.30px;width:62.2px;height:19.58px;background:#9bd77b">73.6</div>
<div class="c" style="left:367.4px;top:195.30px;width:62.2px;height:19.58px;background:#8de27a">70.0</div>
<div class="c" style="left:429.6px;top:195.30px;width:62.2px;height:19.58px;background:#85e97a">67.9</div>
<div class="c" style="left:491.8px;top:195.30px;width:62.2px;height:19.58px;background:#8ae57a">69.1</div>
<div class="c" style="left:554.0px;top:195.30px;width:62.2px;height:19.58px;background:#87e77a">68.4</div>
<div class="c" style="left:616.2px;top:195.30px;width:62.2px;height:19.58px;background:#99d97b">73.2</div>
<div class="c" style="left:678.4px;top:195.30px;width:62.2px;height:19.58px;background:#afc67b">79.4</div>
<div class="c" style="left:740.6px;top:195.30px;width:62.2px;height:19.58px;background:#e6957d">97.5</div>
<div class="c" style="left:802.8px;top:195.30px;width:62.2px;height:19.58px;background:#ed8f7d">99.7</div>
<div class="c" style="left:865.0px;top:195.30px;width:62.2px;height:19.58px;background:#f4887e">102.3</div>
<div class="c" style="left:927.2px;top:195.30px;width:62.2px;height:19.58px;background:#f7857e">103.5</div>
<div class="c" style="left:989.4px;top:195.30px;width:62.2px;height:19.58px;background:#fc817e">105.0</div>
<div class="c" style="left:1051.6px;top:195.30px;width:62.2px;height:19.58px;background:#e8937d">98.1</div>
<div class="c" style="left:1113.8px;top:195.30px;width:62.2px;height:19.58px;background:#e3987d">96.2</div>
<div class="c ax" style="left:118.6px;top:214.88px;width:62.2px;height:19.58px">95.0</div>
<div class="c" style="left:180.8px;top:214.88px;width:62.2px;height:19.58px;background:#7eb6c3">44.3</div>
<div class="c" style="left:243.0px;top:214.88px;width:62.2px;height:19.58px;background:#7ce484">62.0</div>
<div class="c" style="left:305.2px;top:214.88px;width:62.2px;height:19.58px;background:#86e87a">68.2</div>
<div class="c" style="left:367.4px;top:214.88px;width:62.2px;height:19.58px;background:#8be47a">69.4</div>
<div class="c" style="left:429.6px;top:214.88px;width:62.2px;height:19.58px;background:#83eb7a">67.5</div>
<div class="c" style="left:491.8px;top:214.88px;width:62.2px;height:19.58px;background:#85e87a">68.1</div>
<div class="c" style="left:554.0px;top:214.88px;width:62.2px;height:19.58px;background:#84e97a">67.8</div>
<div class="c" style="left:616.2px;top:214.88px;width:62.2px;height:19.58px;background:#99d97b">73.2</div>
<div class="c" style="left:678.4px;top:214.88px;width:62.2px;height:19.58px;background:#abca7b">78.3</div>
<div class="c" style="left:740.6px;top:214.88px;width:62.2px;height:19.58px;background:#e2997d">96.1</div>
<div class="c" style="left:802.8px;top:214.88px;width:62.2px;height:19.58px;background:#e5967d">96.9</div>
<div class="c" style="left:865.0px;top:214.88px;width:62.2px;height:19.58px;background:#f08c7d">100.9</div>
<div class="c" style="left:927.2px;top:214.88px;width:62.2px;height:19.58px;background:#f4887e">102.2</div>
<div class="c" style="left:989.4px;top:214.88px;width:62.2px;height:19.58px;background:#ff7e7e">106.2</div>
<div class="c" style="left:1051.6px;top:214.88px;width:62.2px;height:19.58px;background:#ef8d7d">100.4</div>
<div class="c" style="left:1113.8px;top:214.88px;width:62.2px;height:19.58px;background:#e2997d">95.9</div>
<div class="c ax" style="left:118.6px;top:234.46px;width:62.2px;height:19.58px">90.0</div>
<div class="c" style="left:180.8px;top:234.46px;width:62.2px;height:19.58px;background:#7eb3c7">43.1</div>
<div class="c" style="left:243.0px;top:234.46px;width:62.2px;height:19.58px;background:#7ddf8a">59.9</div>
<div class="c" style="left:305.2px;top:234.46px;width:62.2px;height:19.58px;background:#86e87a">68.2</div>
<div class="c" style="left:367.4px;top:234.46px;width:62.2px;height:19.58px;background:#8ae57a">69.1</div>
<div class="c" style="left:429.6px;top:234.46px;width:62.2px;height:19.58px;background:#7cef7a">66.3</div>
<div class="c" style="left:491.8px;top:234.46px;width:62.2px;height:19.58px;background:#85e87a">68.1</div>
<div class="c" style="left:554.0px;top:234.46px;width:62.2px;height:19.58px;background:#85e97a">67.9</div>
<div class="c" style="left:616.2px;top:234.46px;width:62.2px;height:19.58px;background:#9dd57b">74.3</div>
<div class="c" style="left:678.4px;top:234.46px;width:62.2px;height:19.58px;background:#abca7b">78.1</div>
<div class="c" style="left:740.6px;top:234.46px;width:62.2px;height:19.58px;background:#e19a7d">95.6</div>
<div class="c" style="left:802.8px;top:234.46px;width:62.2px;height:19.58px;background:#d9a17d">93.1</div>
<div class="c" style="left:865.0px;top:234.46px;width:62.2px;height:19.58px;background:#eb907d">99.3</div>
<div class="c" style="left:927.2px;top:234.46px;width:62.2px;height:19.58px;background:#f08c7d">100.8</div>
<div class="c" style="left:989.4px;top:234.46px;width:62.2px;height:19.58px;background:#ef8d7d">100.4</div>
<div class="c" style="left:1051.6px;top:234.46px;width:62.2px;height:19.58px;background:#e5967d">97.1</div>
<div class="c" style="left:1113.8px;top:234.46px;width:62.2px;height:19.58px;background:#e4977d">96.7</div>
<div class="c ax" style="left:118.6px;top:254.04px;width:62.2px;height:19.58px">85.0</div>
<div class="c" style="left:180.8px;top:254.04px;width:62.2px;height:19.58px;background:#7eb4c7">43.3</div>
<div class="c" style="left:243.0px;top:254.04px;width:62.2px;height:19.58px;background:#7ddf8a">60.0</div>
<div class="c" style="left:305.2px;top:254.04px;width:62.2px;height:19.58px;background:#8ae57a">69.1</div>
<div class="c" style="left:367.4px;top:254.04px;width:62.2px;height:19.58px;background:#87e77a">68.5</div>
<div class="c" style="left:429.6px;top:254.04px;width:62.2px;height:19.58px;background:#7ced7c">65.5</div>
<div class="c" style="left:491.8px;top:254.04px;width:62.2px;height:19.58px;background:#84e97a">67.8</div>
<div class="c" style="left:554.0px;top:254.04px;width:62.2px;height:19.58px;background:#87e77a">68.4</div>
<div class="c" style="left:616.2px;top:254.04px;width:62.2px;height:19.58px;background:#a2d17b">75.6</div>
<div class="c" style="left:678.4px;top:254.04px;width:62.2px;height:19.58px;background:#b2c37b">80.5</div>
<div class="c" style="left:740.6px;top:254.04px;width:62.2px;height:19.58px;background:#e09a7d">95.4</div>
<div class="c" style="left:802.8px;top:254.04px;width:62.2px;height:19.58px;background:#de9d7d">94.5</div>
<div class="c" style="left:865.0px;top:254.04px;width:62.2px;height:19.58px;background:#e09a7d">95.4</div>
<div class="c" style="left:927.2px;top:254.04px;width:62.2px;height:19.58px;background:#e09a7d">95.4</div>
<div class="c" style="left:989.4px;top:254.04px;width:62.2px;height:19.58px;background:#e09b7d">95.2</div>
<div class="c" style="left:1051.6px;top:254.04px;width:62.2px;height:19.58px;background:#d3a67c">91.0</div>
<div class="c" style="left:1113.8px;top:254.04px;width:62.2px;height:19.58px;background:#ccad7c">88.7</div>
<div class="c ax" style="left:118.6px;top:273.62px;width:62.2px;height:19.58px">75.0</div>
<div class="c" style="left:180.8px;top:273.62px;width:62.2px;height:19.58px;background:#7eb2c9">42.6</div>
<div class="c" style="left:243.0px;top:273.62px;width:62.2px;height:19.58px;background:#7ddd8d">59.1</div>
<div class="c" style="left:305.2px;top:273.62px;width:62.2px;height:19.58px;background:#87e77a">68.4</div>
<div class="c" style="left:367.4px;top:273.62px;width:62.2px;height:19.58px;background:#92df7a">71.2</div>
<div class="c" style="left:429.6px;top:273.62px;width:62.2px;height:19.58px;background:#85e87a">68.1</div>
<div class="c" style="left:491.8px;top:273.62px;width:62.2px;height:19.58px;background:#87e77a">68.5</div>
<div class="c" style="left:554.0px;top:273.62px;width:62.2px;height:19.58px;background:#8be47a">69.5</div>
<div class="c" style="left:616.2px;top:273.62px;width:62.2px;height:19.58px;background:#a5cf7b">76.4</div>
<div class="c" style="left:678.4px;top:273.62px;width:62.2px;height:19.58px;background:#bbbc7c">83.2</div>
<div class="c" style="left:740.6px;top:273.62px;width:62.2px;height:19.58px;background:#caae7c">88.0</div>
<div class="c" style="left:802.8px;top:273.62px;width:62.2px;height:19.58px;background:#d7a37d">92.2</div>
<div class="c" style="left:865.0px;top:273.62px;width:62.2px;height:19.58px;background:#d6a47d">92.0</div>
<div class="c" style="left:927.2px;top:273.62px;width:62.2px;height:19.58px;background:#d0aa7c">89.8</div>
<div class="c" style="left:989.4px;top:273.62px;width:62.2px;height:19.58px;background:#ccad7c">88.5</div>
<div class="c" style="left:1051.6px;top:273.62px;width:62.2px;height:19.58px;background:#bcbb7c">83.6</div>
<div class="c" style="left:1113.8px;top:273.62px;width:62.2px;height:19.58px;background:#beba7c">84.0</div>
<div class="c ax" style="left:118.6px;top:293.20px;width:62.2px;height:19.58px">70.0</div>
<div class="c" style="left:180.8px;top:293.20px;width:62.2px;height:19.58px;background:#7eb0cd">41.6</div>
<div class="c" style="left:243.0px;top:293.20px;width:62.2px;height:19.58px;background:#7dd695">56.5</div>
<div class="c" style="left:305.2px;top:293.20px;width:62.2px;height:19.58px;background:#8de37a">69.9</div>
<div class="c" style="left:367.4px;top:293.20px;width:62.2px;height:19.58px;background:#90e07a">70.7</div>
<div class="c" style="left:429.6px;top:293.20px;width:62.2px;height:19.58px;background:#83ea7a">67.6</div>
<div class="c" style="left:491.8px;top:293.20px;width:62.2px;height:19.58px;background:#8ce37a">69.7</div>
<div class="c" style="left:554.0px;top:293.20px;width:62.2px;height:19.58px;background:#8ce47a">69.6</div>
<div class="c" style="left:616.2px;top:293.20px;width:62.2px;height:19.58px;background:#a1d27b">75.4</div>
<div class="c" style="left:678.4px;top:293.20px;width:62.2px;height:19.58px;background:#b8be7c">82.3</div>
<div class="c" style="left:740.6px;top:293.20px;width:62.2px;height:19.58px;background:#c0b87c">84.6</div>
<div class="c" style="left:802.8px;top:293.20px;width:62.2px;height:19.58px;background:#c6b27c">86.6</div>
<div class="c" style="left:865.0px;top:293.20px;width:62.2px;height:19.58px;background:#bfb87c">84.4</div>
<div class="c" style="left:927.2px;top:293.20px;width:62.2px;height:19.58px;background:#babd7c">82.9</div>
<div class="c" style="left:989.4px;top:293.20px;width:62.2px;height:19.58px;background:#bdba7c">83.7</div>
<div class="c" style="left:1051.6px;top:293.20px;width:62.2px;height:19.58px;background:#b0c57b">79.8</div>
<div class="c" style="left:1113.8px;top:293.20px;width:62.2px;height:19.58px;background:#acc97b">78.4</div>
<div class="c ax" style="left:118.6px;top:312.78px;width:62.2px;height:19.58px">65.0</div>
<div class="c" style="left:180.8px;top:312.78px;width:62.2px;height:19.58px;background:#7eadd1">40.5</div>
<div class="c" style="left:243.0px;top:312.78px;width:62.2px;height:19.58px;background:#7dd29a">55.1</div>
<div class="c" style="left:305.2px;top:312.78px;width:62.2px;height:19.58px;background:#8de37a">69.8</div>
<div class="c" style="left:367.4px;top:312.78px;width:62.2px;height:19.58px;background:#90e07a">70.7</div>
<div class="c" style="left:429.6px;top:312.78px;width:62.2px;height:19.58px;background:#83ea7a">67.6</div>
<div class="c" style="left:491.8px;top:312.78px;width:62.2px;height:19.58px;background:#89e67a">69.0</div>
<div class="c" style="left:554.0px;top:312.78px;width:62.2px;height:19.58px;background:#81ec7a">67.1</div>
<div class="c" style="left:616.2px;top:312.78px;width:62.2px;height:19.58px;background:#90e07a">70.8</div>
<div class="c" style="left:678.4px;top:312.78px;width:62.2px;height:19.58px;background:#a6ce7b">76.7</div>
<div class="c" style="left:740.6px;top:312.78px;width:62.2px;height:19.58px;background:#adc87b">78.9</div>
<div class="c" style="left:802.8px;top:312.78px;width:62.2px;height:19.58px;background:#b1c47b">80.1</div>
<div class="c" style="left:865.0px;top:312.78px;width:62.2px;height:19.58px;background:#a7cd7b">77.2</div>
<div class="c" style="left:927.2px;top:312.78px;width:62.2px;height:19.58px;background:#a6ce7b">76.9</div>
<div class="c" style="left:989.4px;top:312.78px;width:62.2px;height:19.58px;background:#a2d17b">75.7</div>
<div class="c" style="left:1051.6px;top:312.78px;width:62.2px;height:19.58px;background:#98da7b">72.8</div>
<div class="c" style="left:1113.8px;top:312.78px;width:62.2px;height:19.58px;background:#94dd7b">71.6</div>
<div class="c ax" style="left:118.6px;top:332.36px;width:62.2px;height:19.58px">60.0</div>
<div class="c" style="left:180.8px;top:332.36px;width:62.2px;height:19.58px;background:#7eaad5">39.4</div>
<div class="c" style="left:243.0px;top:332.36px;width:62.2px;height:19.58px;background:#7dcca3">52.5</div>
<div class="c" style="left:305.2px;top:332.36px;width:62.2px;height:19.58px;background:#87e77a">68.4</div>
<div class="c" style="left:367.4px;top:332.36px;width:62.2px;height:19.58px;background:#8be47a">69.5</div>
<div class="c" style="left:429.6px;top:332.36px;width:62.2px;height:19.58px;background:#7cec7c">65.2</div>
<div class="c" style="left:491.8px;top:332.36px;width:62.2px;height:19.58px;background:#7cea7e">64.4</div>
<div class="c" style="left:554.0px;top:332.36px;width:62.2px;height:19.58px;background:#7ce287">61.1</div>
<div class="c" style="left:616.2px;top:332.36px;width:62.2px;height:19.58px;background:#7ce97f">63.9</div>
<div class="c" style="left:678.4px;top:332.36px;width:62.2px;height:19.58px;background:#8be57a">69.3</div>
<div class="c" style="left:740.6px;top:332.36px;width:62.2px;height:19.58px;background:#92df7a">71.1</div>
<div class="c" style="left:802.8px;top:332.36px;width:62.2px;height:19.58px;background:#98da7b">72.8</div>
<div class="c" style="left:865.0px;top:332.36px;width:62.2px;height:19.58px;background:#95dc7b">71.9</div>
<div class="c" style="left:927.2px;top:332.36px;width:62.2px;height:19.58px;background:#92de7b">71.3</div>
<div class="c" style="left:989.4px;top:332.36px;width:62.2px;height:19.58px;background:#8de37a">69.9</div>
<div class="c" style="left:1051.6px;top:332.36px;width:62.2px;height:19.58px;background:#81ec7a">67.1</div>
<div class="c" style="left:1113.8px;top:332.36px;width:62.2px;height:19.58px;background:#86e87a">68.2</div>
<div class="c ax" style="left:118.6px;top:351.94px;width:62.2px;height:19.58px">55.0</div>
<div class="c" style="left:180.8px;top:351.94px;width:62.2px;height:19.58px;background:#7fa7d9">38.4</div>
<div class="c" style="left:243.0px;top:351.94px;width:62.2px;height:19.58px;background:#7dc8a8">51.2</div>
<div class="c" style="left:305.2px;top:351.94px;width:62.2px;height:19.58px;background:#7ce97f">63.8</div>
<div class="c" style="left:367.4px;top:351.94px;width:62.2px;height:19.58px;background:#7ceb7d">64.9</div>
<div class="c" style="left:429.6px;top:351.94px;width:62.2px;height:19.58px;background:#7ce187">60.8</div>
<div class="c" style="left:491.8px;top:351.94px;width:62.2px;height:19.58px;background:#7ddc8d">58.8</div>
<div class="c" style="left:554.0px;top:351.94px;width:62.2px;height:19.58px;background:#7dd299">55.2</div>
<div class="c" style="left:616.2px;top:351.94px;width:62.2px;height:19.58px;background:#7dd498">55.7</div>
<div class="c" style="left:678.4px;top:351.94px;width:62.2px;height:19.58px;background:#7ce583">62.4</div>
<div class="c" style="left:740.6px;top:351.94px;width:62.2px;height:19.58px;background:#7ce583">62.5</div>
<div class="c" style="left:802.8px;top:351.94px;width:62.2px;height:19.58px;background:#7ce682">62.8</div>
<div class="c" style="left:865.0px;top:351.94px;width:62.2px;height:19.58px;background:#7ce583">62.4</div>
<div class="c" style="left:927.2px;top:351.94px;width:62.2px;height:19.58px;background:#7ce484">62.1</div>
<div class="c" style="left:989.4px;top:351.94px;width:62.2px;height:19.58px;background:#7ce484">62.2</div>
<div class="c" style="left:1051.6px;top:351.94px;width:62.2px;height:19.58px;background:#7ce484">62.1</div>
<div class="c" style="left:1113.8px;top:351.94px;width:62.2px;height:19.58px;background:#7ce583">62.3</div>
<div class="c ax" style="left:118.6px;top:371.52px;width:62.2px;height:19.58px">50.0</div>
<div class="c" style="left:180.8px;top:371.52px;width:62.2px;height:19.58px;background:#7eaad5">39.5</div>
<div class="c" style="left:243.0px;top:371.52px;width:62.2px;height:19.58px;background:#7ebbbc">46.1</div>
<div class="c" style="left:305.2px;top:371.52px;width:62.2px;height:19.58px;background:#7ebeb7">47.3</div>
<div class="c" style="left:367.4px;top:371.52px;width:62.2px;height:19.58px;background:#7ec3af">49.3</div>
<div class="c" style="left:429.6px;top:371.52px;width:62.2px;height:19.58px;background:#7ebbbb">46.2</div>
<div class="c" style="left:491.8px;top:371.52px;width:62.2px;height:19.58px;background:#7ebabe">45.5</div>
<div class="c" style="left:554.0px;top:371.52px;width:62.2px;height:19.58px;background:#7ebbbc">46.1</div>
<div class="c" style="left:616.2px;top:371.52px;width:62.2px;height:19.58px;background:#7ebdb9">46.9</div>
<div class="c" style="left:678.4px;top:371.52px;width:62.2px;height:19.58px;background:#7dcca2">52.8</div>
<div class="c" style="left:740.6px;top:371.52px;width:62.2px;height:19.58px;background:#7dcaa5">52.0</div>
<div class="c" style="left:802.8px;top:371.52px;width:62.2px;height:19.58px;background:#7dd29a">55.0</div>
<div class="c" style="left:865.0px;top:371.52px;width:62.2px;height:19.58px;background:#7dd597">56.0</div>
<div class="c" style="left:927.2px;top:371.52px;width:62.2px;height:19.58px;background:#7dd497">55.8</div>
<div class="c" style="left:989.4px;top:371.52px;width:62.2px;height:19.58px;background:#7dd596">56.1</div>
<div class="c" style="left:1051.6px;top:371.52px;width:62.2px;height:19.58px;background:#7dd597">56.0</div>
<div class="c" style="left:1113.8px;top:371.52px;width:62.2px;height:19.58px;background:#7dd597">56.0</div>
<div class="c ax" style="left:118.6px;top:391.10px;width:62.2px;height:19.58px">45.0</div>
<div class="c" style="left:180.8px;top:391.10px;width:62.2px;height:19.58px;background:#7ea8d7">38.8</div>
<div class="c" style="left:243.0px;top:391.10px;width:62.2px;height:19.58px;background:#7eb7c2">44.5</div>
<div class="c" style="left:305.2px;top:391.10px;width:62.2px;height:19.58px;background:#7eaecf">41.1</div>
<div class="c" style="left:367.4px;top:391.10px;width:62.2px;height:19.58px;background:#7eaecf">41.1</div>
<div class="c" style="left:429.6px;top:391.10px;width:62.2px;height:19.58px;background:#7eaad5">39.4</div>
<div class="c" style="left:491.8px;top:391.10px;width:62.2px;height:19.58px;background:#7eabd3">39.9</div>
<div class="c" style="left:554.0px;top:391.10px;width:62.2px;height:19.58px;background:#7eb1cb">42.2</div>
<div class="c" style="left:616.2px;top:391.10px;width:62.2px;height:19.58px;background:#7eb0cc">41.8</div>
<div class="c" style="left:678.4px;top:391.10px;width:62.2px;height:19.58px;background:#7ebdb8">47.0</div>
<div class="c" style="left:740.6px;top:391.10px;width:62.2px;height:19.58px;background:#7ebeb8">47.1</div>
<div class="c" style="left:802.8px;top:391.10px;width:62.2px;height:19.58px;background:#7dc7aa">50.7</div>
<div class="c" style="left:865.0px;top:391.10px;width:62.2px;height:19.58px;background:#7dcaa6">51.8</div>
<div class="c" style="left:927.2px;top:391.10px;width:62.2px;height:19.58px;background:#7dc9a7">51.4</div>
<div class="c" style="left:989.4px;top:391.10px;width:62.2px;height:19.58px;background:#7dcf9e">54.0</div>
<div class="c" style="left:1051.6px;top:391.10px;width:62.2px;height:19.58px;background:#7dcf9e">54.0</div>
<div class="c" style="left:1113.8px;top:391.10px;width:62.2px;height:19.58px;background:#7dcf9e">54.0</div>
<div class="c ax" style="left:118.6px;top:410.68px;width:62.2px;height:19.58px">40.0</div>
<div class="c" style="left:180.8px;top:410.68px;width:62.2px;height:19.58px;background:#7fa3de">36.9</div>
<div class="c" style="left:243.0px;top:410.68px;width:62.2px;height:19.58px;background:#7fa4dd">37.1</div>
<div class="c" style="left:305.2px;top:410.68px;width:62.2px;height:19.58px;background:#7fa1e1">36.1</div>
<div class="c" style="left:367.4px;top:410.68px;width:62.2px;height:19.58px;background:#7fa4de">37.0</div>
<div class="c" style="left:429.6px;top:410.68px;width:62.2px;height:19.58px;background:#7f9be9">33.5</div>
<div class="c" style="left:491.8px;top:410.68px;width:62.2px;height:19.58px;background:#7f9ee5">34.8</div>
<div class="c" style="left:554.0px;top:410.68px;width:62.2px;height:19.58px;background:#7fa5dc">37.4</div>
<div class="c" style="left:616.2px;top:410.68px;width:62.2px;height:19.58px;background:#7fa7da">38.2</div>
<div class="c" style="left:678.4px;top:410.68px;width:62.2px;height:19.58px;background:#7eafcd">41.5</div>
<div class="c" style="left:740.6px;top:410.68px;width:62.2px;height:19.58px;background:#7eafce">41.3</div>
<div class="c" style="left:802.8px;top:410.68px;width:62.2px;height:19.58px;background:#7ec0b4">48.0</div>
<div class="c" style="left:865.0px;top:410.68px;width:62.2px;height:19.58px;background:#7ec3b0">49.2</div>
<div class="c" style="left:927.2px;top:410.68px;width:62.2px;height:19.58px;background:#7ebfb6">47.7</div>
<div class="c" style="left:989.4px;top:410.68px;width:62.2px;height:19.58px;background:#7dc8a8">51.2</div>
<div class="c" style="left:1051.6px;top:410.68px;width:62.2px;height:19.58px;background:#7dc8a8">51.2</div>
<div class="c" style="left:1113.8px;top:410.68px;width:62.2px;height:19.58px;background:#7dc8a8">51.2</div>
<div class="c ax" style="left:118.6px;top:430.26px;width:62.2px;height:19.58px">35.0</div>
<div class="c" style="left:180.8px;top:430.26px;width:62.2px;height:19.58px;background:#7fa0e3">35.5</div>
<div class="c" style="left:243.0px;top:430.26px;width:62.2px;height:19.58px;background:#7f99eb">33.0</div>
<div class="c" style="left:305.2px;top:430.26px;width:62.2px;height:19.58px;background:#7f97ed">32.1</div>
<div class="c" style="left:367.4px;top:430.26px;width:62.2px;height:19.58px;background:#7f91f3">29.8</div>
<div class="c" style="left:429.6px;top:430.26px;width:62.2px;height:19.58px;background:#7f8ef6">28.5</div>
<div class="c" style="left:491.8px;top:430.26px;width:62.2px;height:19.58px;background:#7f90f4">29.4</div>
<div class="c" style="left:554.0px;top:430.26px;width:62.2px;height:19.58px;background:#7f96ef">31.6</div>
<div class="c" style="left:616.2px;top:430.26px;width:62.2px;height:19.58px;background:#7f9aea">33.2</div>
<div class="c" style="left:678.4px;top:430.26px;width:62.2px;height:19.58px;background:#7f9de6">34.5</div>
<div class="c" style="left:740.6px;top:430.26px;width:62.2px;height:19.58px;background:#7f9fe4">35.2</div>
<div class="c" style="left:802.8px;top:430.26px;width:62.2px;height:19.58px;background:#7eb5c5">43.7</div>
<div class="c" style="left:865.0px;top:430.26px;width:62.2px;height:19.58px;background:#7eb1cb">42.2</div>
<div class="c" style="left:927.2px;top:430.26px;width:62.2px;height:19.58px;background:#7eb4c6">43.5</div>
<div class="c" style="left:989.4px;top:430.26px;width:62.2px;height:19.58px;background:#7dc7aa">50.7</div>
<div class="c" style="left:1051.6px;top:430.26px;width:62.2px;height:19.58px;background:#7dc7aa">50.7</div>
<div class="c" style="left:1113.8px;top:430.26px;width:62.2px;height:19.58px;background:#7dc7aa">50.7</div>
<div class="c ax" style="left:118.6px;top:449.84px;width:62.2px;height:19.58px">30.0</div>
<div class="c" style="left:180.8px;top:449.84px;width:62.2px;height:19.58px;background:#7f94f0">31.0</div>
<div class="c" style="left:243.0px;top:449.84px;width:62.2px;height:19.58px;background:#7f94f0">31.0</div>
<div class="c" style="left:305.2px;top:449.84px;width:62.2px;height:19.58px;background:#7f94f0">31.0</div>
<div class="c" style="left:367.4px;top:449.84px;width:62.2px;height:19.58px;background:#7f92f3">30.0</div>
<div class="c" style="left:429.6px;top:449.84px;width:62.2px;height:19.58px;background:#7f91f3">29.8</div>
<div class="c" style="left:491.8px;top:449.84px;width:62.2px;height:19.58px;background:#808bf8">27.5</div>
<div class="c" style="left:554.0px;top:449.84px;width:62.2px;height:19.58px;background:#8089fa">26.6</div>
<div class="c" style="left:616.2px;top:449.84px;width:62.2px;height:19.58px;background:#7f91f3">29.8</div>
<div class="c" style="left:678.4px;top:449.84px;width:62.2px;height:19.58px;background:#7f94f0">31.0</div>
<div class="c" style="left:740.6px;top:449.84px;width:62.2px;height:19.58px;background:#7f93f2">30.4</div>
<div class="c" style="left:802.8px;top:449.84px;width:62.2px;height:19.58px;background:#7fa1e1">36.0</div>
<div class="c" style="left:865.0px;top:449.84px;width:62.2px;height:19.58px;background:#7fa8d8">38.5</div>
<div class="c" style="left:927.2px;top:449.84px;width:62.2px;height:19.58px;background:#7eb8c0">45.0</div>
<div class="c" style="left:989.4px;top:449.84px;width:62.2px;height:19.58px;background:#7dcba4">52.4</div>
<div class="c" style="left:1051.6px;top:449.84px;width:62.2px;height:19.58px;background:#7dcba4">52.4</div>
<div class="c" style="left:1113.8px;top:449.84px;width:62.2px;height:19.58px;background:#7dcba4">52.4</div>
<div class="c ax" style="left:118.6px;top:469.42px;width:62.2px;height:19.58px">25.0</div>
<div class="c" style="left:180.8px;top:469.42px;width:62.2px;height:19.58px;background:#7f94f0">31.0</div>
<div class="c" style="left:243.0px;top:469.42px;width:62.2px;height:19.58px;background:#7f94f0">31.0</div>
<div class="c" style="left:305.2px;top:469.42px;width:62.2px;height:19.58px;background:#7f94f0">31.0</div>
<div class="c" style="left:367.4px;top:469.42px;width:62.2px;height:19.58px;background:#7f94f0">31.0</div>
<div class="c" style="left:429.6px;top:469.42px;width:62.2px;height:19.58px;background:#7f91f3">29.7</div>
<div class="c" style="left:491.8px;top:469.42px;width:62.2px;height:19.58px;background:#8086fc">25.5</div>
<div class="c" style="left:554.0px;top:469.42px;width:62.2px;height:19.58px;background:#8081fe">23.5</div>
<div class="c" style="left:616.2px;top:469.42px;width:62.2px;height:19.58px;background:#8087fb">25.8</div>
<div class="c" style="left:678.4px;top:469.42px;width:62.2px;height:19.58px;background:#808cf8">27.6</div>
<div class="c" style="left:740.6px;top:469.42px;width:62.2px;height:19.58px;background:#8088fb">26.2</div>
<div class="c" style="left:802.8px;top:469.42px;width:62.2px;height:19.58px;background:#8087fb">25.9</div>
<div class="c" style="left:865.0px;top:469.42px;width:62.2px;height:19.58px;background:#7f91f3">29.8</div>
<div class="c" style="left:927.2px;top:469.42px;width:62.2px;height:19.58px;background:#7eabd4">39.8</div>
<div class="c" style="left:989.4px;top:469.42px;width:62.2px;height:19.58px;background:#7eabd3">39.9</div>
<div class="c" style="left:1051.6px;top:469.42px;width:62.2px;height:19.58px;background:#7fa8d8">38.5</div>
<div class="c" style="left:1113.8px;top:469.42px;width:62.2px;height:19.58px;background:#7eadd1">40.5</div>
<div class="c ax" style="left:118.6px;top:489.00px;width:62.2px;height:19.58px">15.0</div>
<div class="c" style="left:180.8px;top:489.00px;width:62.2px;height:19.58px;background:#7f94f0">31.0</div>
<div class="c" style="left:243.0px;top:489.00px;width:62.2px;height:19.58px;background:#7f94f0">31.0</div>
<div class="c" style="left:305.2px;top:489.00px;width:62.2px;height:19.58px;background:#7f94f0">31.0</div>
<div class="c" style="left:367.4px;top:489.00px;width:62.2px;height:19.58px;background:#7f94f0">31.0</div>
<div class="c" style="left:429.6px;top:489.00px;width:62.2px;height:19.58px;background:#7f95f0">31.1</div>
<div class="c" style="left:491.8px;top:489.00px;width:62.2px;height:19.58px;background:#7f90f4">29.3</div>
<div class="c" style="left:554.0px;top:489.00px;width:62.2px;height:19.58px;background:#8084fd">24.6</div>
<div class="c" style="left:616.2px;top:489.00px;width:62.2px;height:19.58px;background:#8088fb">26.2</div>
<div class="c" style="left:678.4px;top:489.00px;width:62.2px;height:19.58px;background:#8088fb">26.3</div>
<div class="c" style="left:740.6px;top:489.00px;width:62.2px;height:19.58px;background:#8086fc">25.4</div>
<div class="c" style="left:802.8px;top:489.00px;width:62.2px;height:19.58px;background:#8084fd">24.7</div>
<div class="c" style="left:865.0px;top:489.00px;width:62.2px;height:19.58px;background:#807eff">22.3</div>
<div class="c" style="left:927.2px;top:489.00px;width:62.2px;height:19.58px;background:#807fff">22.5</div>
<div class="c" style="left:989.4px;top:489.00px;width:62.2px;height:19.58px;background:#8083fe">24.1</div>
<div class="c" style="left:1051.6px;top:489.00px;width:62.2px;height:19.58px;background:#8089fa">26.7</div>
<div class="c" style="left:1113.8px;top:489.00px;width:62.2px;height:19.58px;background:#8083fd">24.4</div>
<div class="c ax xr" style="left:180.8px;top:508.58px;width:62.2px;height:24.8px">800</div>
<div class="c ax xr" style="left:243.0px;top:508.58px;width:62.2px;height:24.8px">1000</div>
<div class="c ax xr" style="left:305.2px;top:508.58px;width:62.2px;height:24.8px">1300</div>
<div class="c ax xr" style="left:367.4px;top:508.58px;width:62.2px;height:24.8px">1700</div>
<div class="c ax xr" style="left:429.6px;top:508.58px;width:62.2px;height:24.8px">2100</div>
<div class="c ax xr" style="left:491.8px;top:508.58px;width:62.2px;height:24.8px">2600</div>
<div class="c ax xr" style="left:554.0px;top:508.58px;width:62.2px;height:24.8px">3200</div>
<div class="c ax xr" style="left:616.2px;top:508.58px;width:62.2px;height:24.8px">3800</div>
<div class="c ax xr" style="left:678.4px;top:508.58px;width:62.2px;height:24.8px">4000</div>
<div class="c ax xr" style="left:740.6px;top:508.58px;width:62.2px;height:24.8px">4300</div>
<div class="c ax xr" style="left:802.8px;top:508.58px;width:62.2px;height:24.8px">5000</div>
<div class="c ax xr" style="left:865.0px;top:508.58px;width:62.2px;height:24.8px">5500</div>
<div class="c ax xr" style="left:927.2px;top:508.58px;width:62.2px;height:24.8px">6000</div>
<div class="c ax xr" style="left:989.4px;top:508.58px;width:62.2px;height:24.8px">6500</div>
<div class="c ax xr" style="left:1051.6px;top:508.58px;width:62.2px;height:24.8px">7000</div>
<div class="c ax xr" style="left:1113.8px;top:508.58px;width:62.2px;height:24.8px">8000</div>
<div class="abs" style="left:118.6px;top:508.58px;width:62.2px;height:24.8px;background:linear-gradient(#fdfeff 0%,#f6f9fd 35%,#d2e1f3 72%,#b4cdea 100%);border:1px solid #c4d2e4"><svg style="position:absolute;left:27.5px;top:8px" width="8" height="8" viewBox="0 0 8 8"><path d="M2,0.500 V5.500 H7 M4.500,3 V5.500" stroke="#222" stroke-width="1.1" fill="none"/></svg></div>
<span class="t" style="left:632.08px;top:539.51px;font-size:9.2px;color:#222;">rpm</span>
<div class="dbtn dis db-undo" style="left:945.5px;top:550.5px;width:56.5px;height:22.8px"><svg width="14" height="12" viewBox="0 0 14 12"><path d="M2.600,3.400 L7.200,1.800 L6.400,3.300 C9.800,3.400 11,6.200 9.800,10.400 C9.400,7.600 8.200,6 5.600,5.800 L5.200,7.600Z" fill="#c8c8c8"/></svg></div>
<div class="dbtn dis db-redo" style="left:1002.9px;top:550.5px;width:56.5px;height:22.8px"><svg width="14" height="12" viewBox="0 0 14 12"><path d="M11.6,4.4 L7.6,1.6 L7.8,3.4 C4.6,3.2 3.4,5.8 4.4,10.6 C4.8,7.6 5.6,6.2 8,6.4 L8.2,8Z" fill="#c8c8c8"/></svg></div>
<div class="dbtn db-burn" style="left:1060.3px;top:550.5px;width:56.5px;height:22.8px"></div>
<div class="dbtn db-close" style="left:1117.7px;top:550.5px;width:56.5px;height:22.8px"></div>
<span class="abs" style="left:1068.6px;top:553.9px;line-height:0"><svg width="16.4" height="16.4" viewBox="0 0 16 16"><circle cx="8" cy="8" r="7.2" fill="#4a4a4a" stroke="#2e2e2e" stroke-width="0.8"/><path d="M8,2.6 c0.6,2 2.8,3 2.8,5.8 a2.9,3.4 0 0 1 -5.8,0.2 c0,-1.4 0.8,-2 1.2,-3 c0.6,0.8 0.8,1.4 0.8,2 c0.8,-1 1.2,-2.8 1,-5z" fill="#fff"/></svg></span>
<span class="t" style="left:1089.10px;top:557.76px;font-size:9.5px;color:#262626;font-weight:bold;letter-spacing:-0.191px;">Burn</span>
<span class="t" style="left:1133.70px;top:557.76px;font-size:9.5px;color:#262626;font-weight:bold;letter-spacing:-0.054px;">Close</span>
<svg class="abs" style="left:217.700px;top:317.400px" width="11" height="16" viewBox="-1 -1 11 16"><path d="M0,0 L0,11.200 L2.600,8.800 L4.500,13 L6.200,12.200 L4.300,8.100 L7.800,8.100Z" fill="#fff" stroke="#222" stroke-width="0.550" stroke-linejoin="round"/></svg>
<div class="abs taskbar"></div>
<div class="abs" style="left:64px;top:688.2px;width:38px;height:39.8px;background:#04070a"></div><svg class="abs" style="left:76px;top:697.3px" width="14.5" height="13.5" viewBox="0 0 15 14"><path d="M0,2 L6.5,1.100 V6.600 H0Z M7.300,1 L15,0 V6.600 H7.300Z M0,7.400 H6.500 V12.900 L0,12Z M7.300,7.400 H15 V14 L7.300,13Z" fill="#f6f6f6"/></svg>
<div class="abs" style="left:102px;top:688.2px;width:276px;height:39.8px;background:#f1f1f1"></div><div class="abs" style="left:110.300px;top:695.500px;width:16.200px;height:16.200px;border-radius:50%;border:2.100px solid #0c0c0c"></div>
<span class="t" style="left:135.50px;top:699.28px;font-size:11.3px;color:#4c4c4c;letter-spacing:-0.135px;">Type here to search</span>
<svg class="abs" style="left:355.500px;top:696.500px" width="11.500" height="15.500" viewBox="0 0 11.500 15.500"><rect x="3.200" y="0.800" width="5.100" height="9" rx="2.550" fill="#dcdcdc" stroke="#5c5c5c" stroke-width="1"/><path d="M1,7.200 a4.750,4.750 0 0 0 9.500,0 M5.750,12 V14.300 M3.400,14.500 h4.700" stroke="#5c5c5c" stroke-width="1.100" fill="none"/></svg>
<svg class="abs" style="left:378px;top:688px" width="240" height="40" viewBox="378 688 240 40"><rect x="575" y="688.200" width="38.800" height="40" fill="#35393f"/><g stroke="#f2f2f2" stroke-width="1.600" fill="none"><rect x="392.600" y="701.300" width="6.600" height="6.200"/><path d="M390.800,698.400 v11.800 M401.300,698.400 v11.800"/><path d="M392,699.200 h8 M392,709.400 h8" stroke-width="1.300"/><path d="M403.600,702.200 v8" stroke-width="1.500"/></g><circle cx="403.600" cy="699.300" r="0.900" fill="#f2f2f2"/><path d="M430.200,705.500 C430.200,700.200 433.800,696.300 438.600,696.300 C443.400,696.300 446.200,699.700 446.200,704.600 L446.200,706 L435.400,706 C435.600,708.500 437.400,709.600 439.800,709.600 C441.800,709.600 443.600,709 445.200,708 L445.200,711.300 C443.600,712.300 441.400,712.800 439,712.800 C433.800,712.800 430.200,710 430.200,705.500 Z M435.500,703 L441.800,703 C441.800,700.800 440.700,699.600 438.800,699.600 C437,699.600 435.800,700.900 435.500,703 Z" fill="#1f86e4"/><path d="M430.200,705 C430.800,700.500 433.500,698.500 437,698 C434,699 432.400,701.500 432.600,705 Z" fill="#1f86e4"/><path d="M468,697 h6.300 l1.500,1.900 h9.800 v12.100 h-17.600z" fill="#f3c243"/><rect x="468" y="700.800" width="17.600" height="10.200" fill="#fbdf7e"/><rect x="471.400" y="704.600" width="10.800" height="6.400" fill="#3b9be2"/><rect x="474" y="707" width="5.600" height="4" fill="#fbdf7e"/><rect x="505" y="695" width="20.600" height="17.500" fill="#030303"/><text x="506.600" y="708" font-family="Liberation Sans, sans-serif" font-size="11.800" font-weight="bold" font-style="italic" fill="#ececec" letter-spacing="-0.700">G4</text><path d="M521,699.200 h3.600 M522.800,697.400 v3.600" stroke="#ececec" stroke-width="1.100"/><rect x="547.500" y="696.300" width="15" height="14.300" rx="1.800" fill="#33383a" stroke="#51585a" stroke-width="0.800"/><path d="M548.500,703.300 h3 l1.900,-5 l2.500,9.800 l1.900,-5.400 h3.700" stroke="#f4e02a" stroke-width="1.500" fill="none" stroke-linejoin="round"/><rect x="588" y="697.500" width="6.500" height="8" fill="#f0e6b0"/><circle cx="593" cy="702.500" r="4.300" fill="#4a86d8"/><path d="M590.500,701 a3,3 0 0 1 4.500,-1" stroke="#cfe3f8" stroke-width="1.100" fill="none"/><path d="M594,705 L599.800,709.800 M599.500,705.300 L594.500,710" stroke="#aab4c8" stroke-width="1.700"/><g fill="#77b8ec"><rect x="421.300" y="718" width="31.700" height="8"/><rect x="460.600" y="718" width="31.900" height="8"/><rect x="500" y="718" width="32" height="8"/><rect x="539.400" y="718" width="31.900" height="8"/><rect x="575" y="718" width="38.800" height="8"/></g></svg>
<svg class="abs" style="left:1010px;top:688px" width="206" height="32" viewBox="1010 688 206 32"><g stroke="#f2f2f2" stroke-width="1.250" fill="none"><circle cx="1026" cy="700" r="2.200"/><path d="M1022.300,707.500 c0,-3.400 1.500,-4.800 3.700,-4.800 s3.700,1.400 3.700,4.800"/><circle cx="1020.600" cy="703.600" r="1.700"/><path d="M1017.600,709.800 c0,-3 1.200,-4.200 3,-4.200 c0.800,0 1.400,0.200 1.900,0.700"/></g><path d="M1047.200,707 l5.100,-5.100 l5.100,5.100" stroke="#f2f2f2" stroke-width="1.300" fill="none"/><rect x="1066.800" y="701.800" width="10" height="5.800" fill="#ececec"/><rect x="1076.800" y="703.300" width="1.300" height="2.800" fill="#ececec"/><path d="M1066,703 v-2 a1.500,1.500 0 0 1 3,0 v0.800 M1067.500,701.800 v3" stroke="#ececec" stroke-width="1.100" fill="none"/><g stroke="#f2f2f2" stroke-width="1.200" fill="none"><rect x="1087.800" y="700.200" width="9.400" height="6.600"/><path d="M1089.800,709.200 h5.400 M1092.500,706.800 v2.400"/></g><rect x="1084.300" y="699" width="3.700" height="4.800" fill="#f2f2f2"/><path d="M1086.100,703.800 v4.400 h2.500" stroke="#f2f2f2" stroke-width="1" fill="none"/><path d="M1103.500,702.200 h2.200 l3,-2.800 v9.400 l-3,-2.800 h-2.200z" fill="none" stroke="#f2f2f2" stroke-width="1.100"/><path d="M1110.800,701.800 a3,3 0 0 1 0,4.600 M1112.800,700 a5.400,5.400 0 0 1 0,8.200 M1114.800,698.600 a7.600,7.600 0 0 1 0,11" stroke="#f2f2f2" stroke-width="1.050" fill="none"/><path d="M1183.800,698.200 h12 v8.600 h-4 l-2,2.500 l-2,-2.500 h-4z" stroke="#f2f2f2" stroke-width="1.250" fill="none"/><path d="M1213,688 v32" stroke="#4a5058" stroke-width="1"/></svg>
<span class="t" style="left:1127.50px;top:692.71px;font-size:9.2px;color:#f6f6f6;letter-spacing:-0.110px;">12:09 PM</span>
<span class="t" style="left:1127.50px;top:707.51px;font-size:9.2px;color:#f6f6f6;letter-spacing:0.249px;">4/2/2019</span>
</div></div></body></html>
